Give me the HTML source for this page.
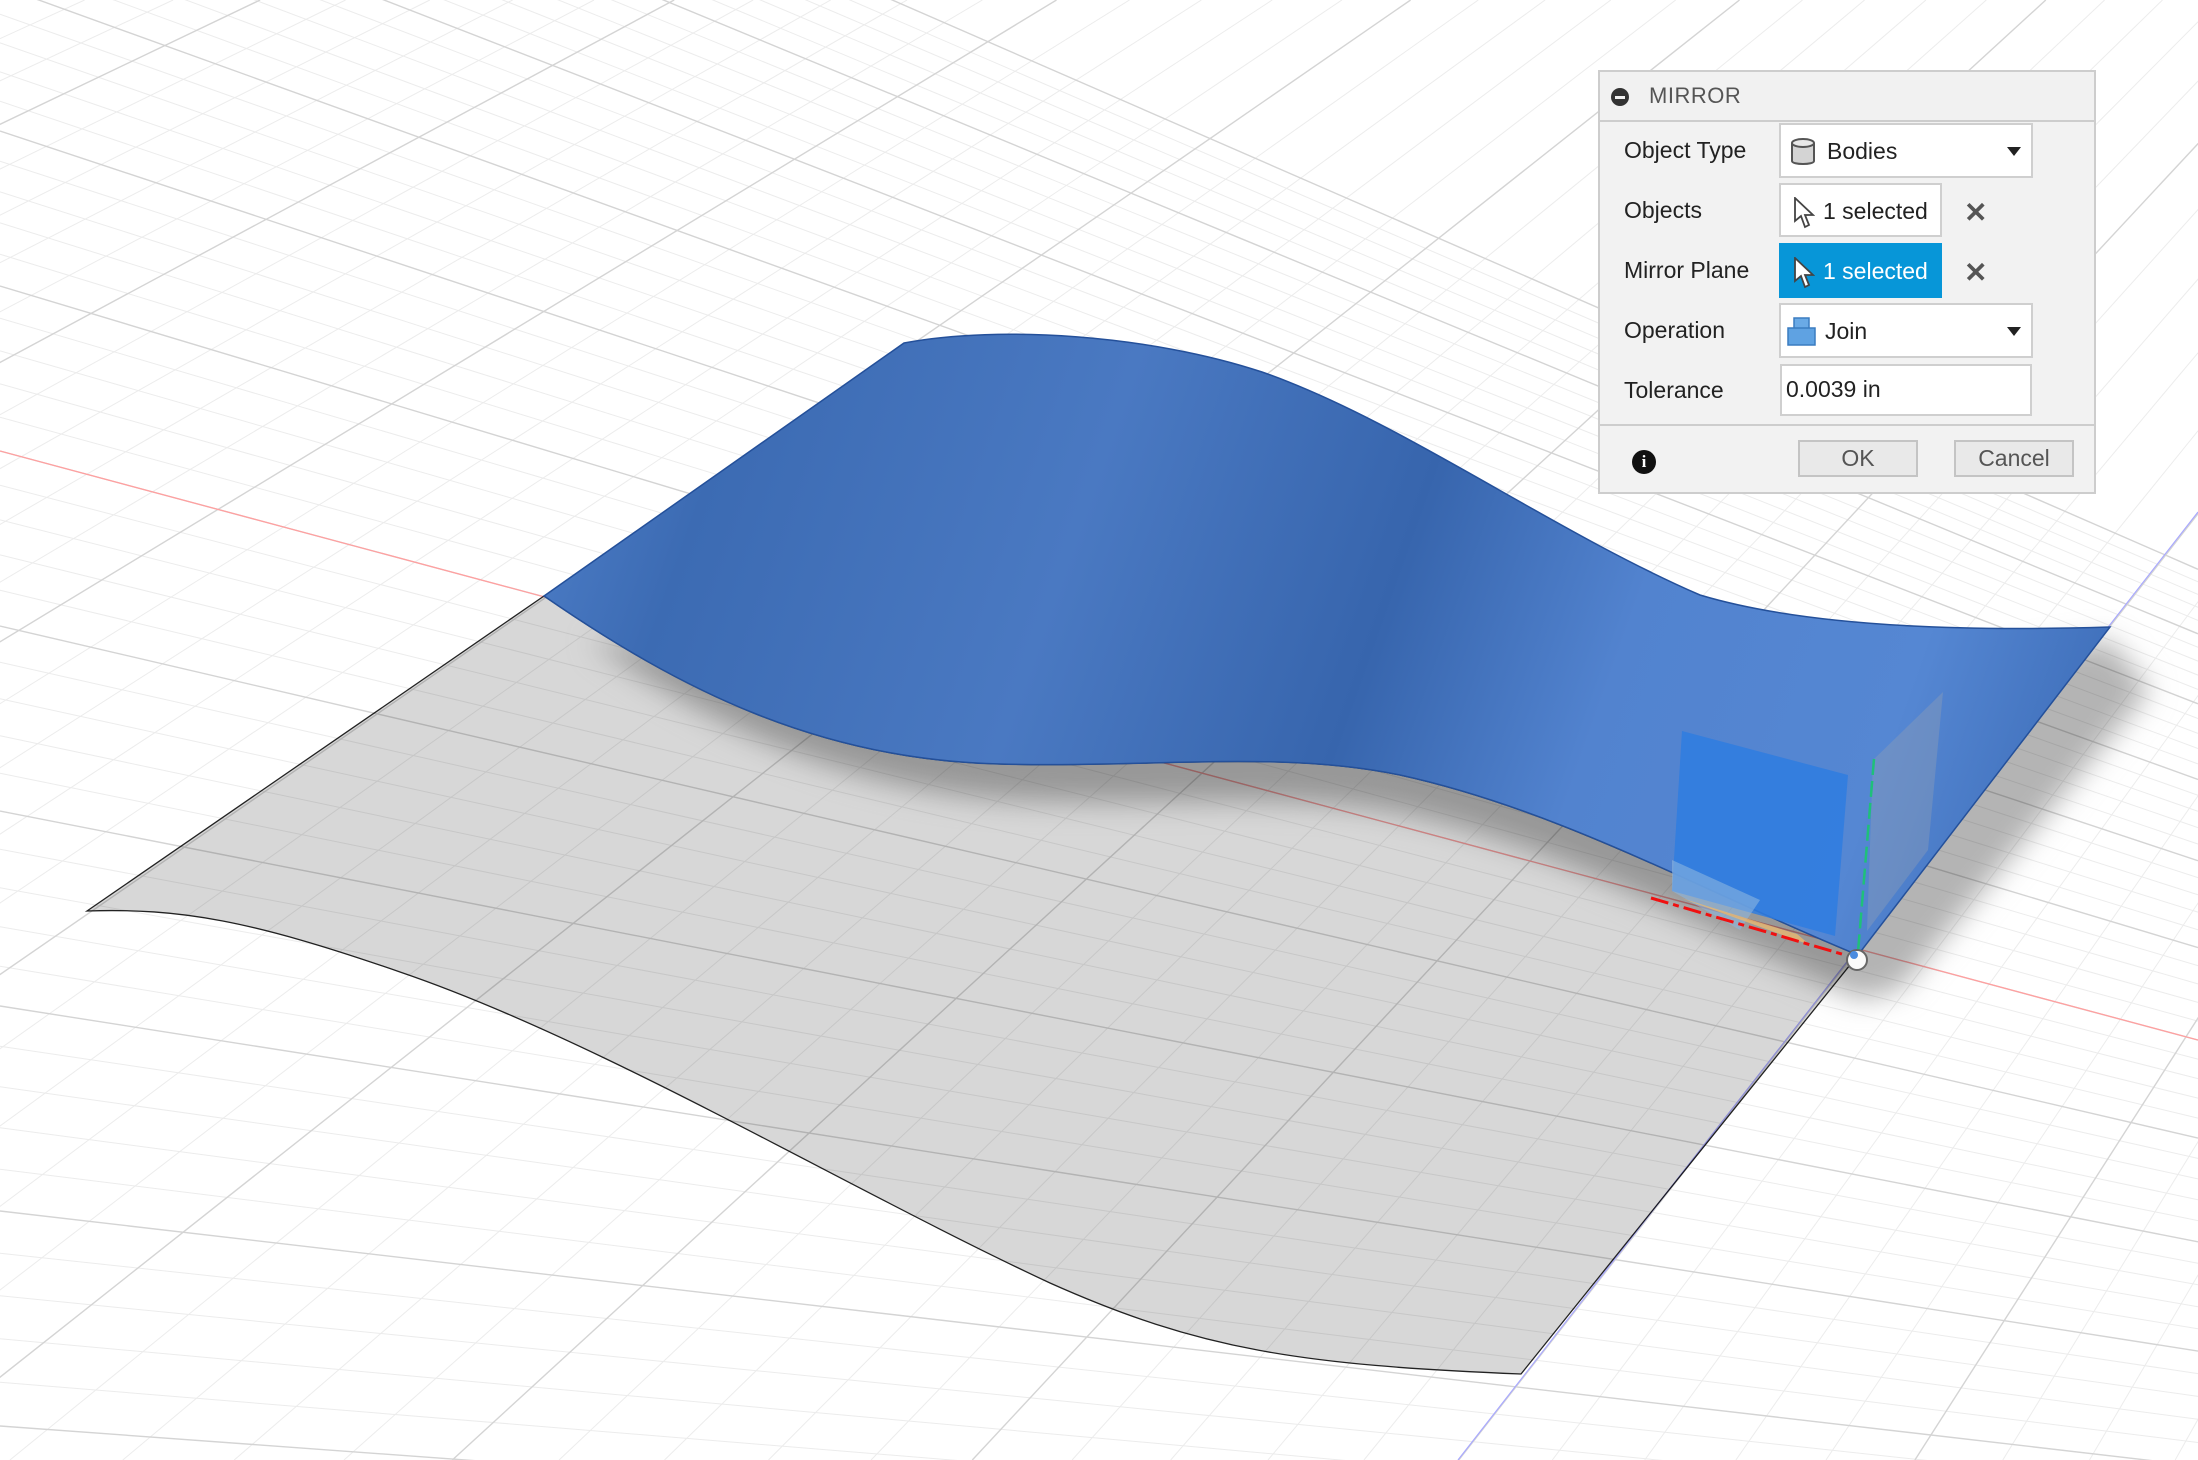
<!DOCTYPE html>
<html><head><meta charset="utf-8">
<style>
html,body{margin:0;padding:0;background:#fff;width:2198px;height:1460px;overflow:hidden;font-family:"Liberation Sans",sans-serif}
#scene{position:absolute;left:0;top:0}
.dlg{position:absolute;left:1598px;top:70px;width:498px;height:424px;background:#f2f2f2;border:2px solid #cdcdcd;box-sizing:border-box}
.hdr{position:absolute;left:0;top:0;right:0;height:48px;border-bottom:2px solid #cdcdcd;background:#f1f1f1}
.hdr .t{position:absolute;left:49px;top:11px;font-size:22px;color:#555;letter-spacing:0.5px}
.hdr .m{position:absolute;left:11px;top:16px;width:18px;height:18px;border-radius:50%;background:#333}
.hdr .m:after{content:"";position:absolute;left:4px;top:8px;width:10px;height:2.5px;background:#f2f2f2}
.lbl{position:absolute;left:24px;font-size:23px;color:#222}
.box{position:absolute;background:#fff;border:2px solid #cfcfcf;box-sizing:border-box;font-size:23px;color:#222}
.box span{position:absolute;top:13px}
.sel{background:#0796d8;border-color:#0796d8;color:#fff}
.arr{position:absolute;right:10px;top:22px;width:0;height:0;border-left:7px solid transparent;border-right:7px solid transparent;border-top:9px solid #222}
.x{position:absolute;left:364px;font-size:28px;color:#555;font-weight:bold}
.foot{position:absolute;left:0;right:0;top:352px;border-top:2px solid #cdcdcd}
.btn{position:absolute;top:368px;height:37px;background:#e9e9e9;border:2px solid #c4c4c4;box-sizing:border-box;font-size:23px;color:#555;text-align:center;line-height:33px}
.info{position:absolute;left:32px;top:378px;width:24px;height:24px;border-radius:50%;background:#111;color:#fff;font:bold 17px "Liberation Serif",serif;text-align:center;line-height:24px}
</style></head><body>
<svg id="scene" width="2198" height="1460" viewBox="0 0 2198 1460" xmlns="http://www.w3.org/2000/svg">
<defs>
<linearGradient id="bg1" x1="560" y1="330" x2="2050" y2="860" gradientUnits="userSpaceOnUse">
<stop offset="0" stop-color="#4f80ca"/>
<stop offset="0.12" stop-color="#3c6bb3"/>
<stop offset="0.35" stop-color="#4a79c2"/>
<stop offset="0.55" stop-color="#3765ad"/>
<stop offset="0.7" stop-color="#5283cf"/>
<stop offset="0.88" stop-color="#5587d3"/>
<stop offset="1" stop-color="#3f6fba"/>
</linearGradient>
<filter id="blur" x="-10%" y="-10%" width="120%" height="120%"><feGaussianBlur stdDeviation="14"/></filter>
</defs>
<g id="grid"></g>
<line x1="0" y1="451" x2="2198" y2="1040" stroke="#ffa0a0" stroke-width="1.3"/>
<line x1="2198" y1="512" x2="1458" y2="1460" stroke="#a8a8ff" stroke-width="1.2"/>
<path style="mix-blend-mode:multiply" fill="#d7d7d7" stroke="#222" stroke-width="1.3" d="M87,911 L544,596 C680,690 820,760 1000,764 C1150,768 1280,750 1400,775 C1560,810 1700,890 1858,955 L1521,1374 C1300,1365 1200,1350 1050,1283 C850,1190 600,1040 400,972 C250,920 180,908 87,911 Z"/>
<g style="mix-blend-mode:multiply" filter="url(#blur)">
<path fill="#b4b4b4" d="M590,640 C700,720 840,790 1010,800 C1160,808 1290,790 1410,815 C1570,850 1700,930 1860,1000 L1900,990 L2150,690 L2110,640 C1960,660 1900,700 1700,720 L1100,700 Z"/>
</g>
<path fill="url(#bg1)" stroke="#24509a" stroke-width="1.5" d="M544,596 C680,690 820,760 1000,764 C1150,768 1280,750 1400,775 C1560,810 1700,890 1858,955 L2110,627 C1950,632 1800,625 1700,595 C1550,530 1400,420 1262,372 C1150,335 1000,325 904,343 Z"/>
<polygon points="1682,731 1848,775 1835,936 1672,891" fill="#2f7de0" opacity="0.85"/>
<polygon points="1672,860 1760,900 1740,930 1672,891" fill="#8cb6e0" opacity="0.6"/>
<polygon points="1681,898 1797,934 1810,945 1700,905" fill="#e8b870" opacity="0.8"/>
<polygon points="1943,692 1928,850 1867,931 1873,760" fill="#8a9cb8" opacity="0.45"/>
<line x1="1874" y1="759" x2="1858" y2="952" stroke="#1fc07a" stroke-width="2.5" stroke-dasharray="16,6"/>
<line x1="1651" y1="898" x2="1845" y2="955" stroke="#f01010" stroke-width="3" stroke-dasharray="18,5,6,5"/>
<circle cx="1857" cy="960" r="10" fill="#fafafa" stroke="#666" stroke-width="2"/>
<circle cx="1854" cy="955" r="4" fill="#4a8be0"/>
</svg>

<div class="dlg">
 <div class="hdr"><div class="m"></div><div class="t">MIRROR</div></div>
 <div class="lbl" style="top:65px">Object Type</div>
 <div class="box" style="left:179px;top:51px;width:254px;height:55px">
  <svg style="position:absolute;left:8px;top:12px" width="28" height="30" viewBox="0 0 28 30"><path d="M3,6 L3,24 C3,28 25,28 25,24 L25,6" fill="#d4d4d4" stroke="#555" stroke-width="2"/><ellipse cx="14" cy="6" rx="11" ry="4" fill="#e8e8e8" stroke="#555" stroke-width="2"/></svg>
  <span style="left:46px">Bodies</span><div class="arr"></div></div>
 <div class="lbl" style="top:125px">Objects</div>
 <div class="box" style="left:179px;top:111px;width:163px;height:54px">
  <svg style="position:absolute;left:12px;top:12px" width="22" height="32" viewBox="0 0 22 32"><path d="M2,1 L2,24 L8,19 L12,30 L16,28 L12,18 L20,18 Z" fill="#fff" stroke="#444" stroke-width="1.8"/></svg>
  <span style="left:42px">1 selected</span></div>
 <div class="x" style="top:124px">✕</div>
 <div class="lbl" style="top:185px">Mirror Plane</div>
 <div class="box sel" style="left:179px;top:171px;width:163px;height:55px">
  <svg style="position:absolute;left:12px;top:12px" width="22" height="32" viewBox="0 0 22 32"><path d="M2,1 L2,24 L8,19 L12,30 L16,28 L12,18 L20,18 Z" fill="#fff" stroke="#444" stroke-width="1.8"/></svg>
  <span style="left:42px">1 selected</span></div>
 <div class="x" style="top:184px">✕</div>
 <div class="lbl" style="top:245px">Operation</div>
 <div class="box" style="left:179px;top:231px;width:254px;height:55px">
  <svg style="position:absolute;left:6px;top:12px" width="30" height="30" viewBox="0 0 30 30"><rect x="7" y="1" width="15" height="18" fill="#6aaae6" stroke="#3a7cc0" stroke-width="1.5"/><rect x="1" y="11" width="27" height="17" fill="#5fa2e2" stroke="#3a7cc0" stroke-width="1.5"/></svg>
  <span style="left:44px">Join</span><div class="arr"></div></div>
 <div class="lbl" style="top:305px">Tolerance</div>
 <div class="box" style="left:180px;top:292px;width:252px;height:52px"><span style="left:4px;top:10px">0.0039 in</span></div>
 <div class="foot"></div>
 <div class="info">i</div>
 <div class="btn" style="left:198px;width:120px">OK</div>
 <div class="btn" style="left:354px;width:120px">Cancel</div>
</div>

<script>
(function(){
 var minor='',major='';
 function L(x1,y1,x2,y2){return '<line x1="'+x1.toFixed(1)+'" y1="'+y1.toFixed(1)+'" x2="'+x2.toFixed(1)+'" y2="'+y2.toFixed(1)+'"/>';}
 var VA=[5000,1791],VB=[3993,-1784];
 for(var i=-30;i<=40;i++){var k=i/5;var y0=451+170*k+5*k*k;var s=(VA[1]-y0)/VA[0];
  var l=L(0,y0,2198,y0+s*2198); if(i%5==0)major+=l;else minor+=l;}
 for(var j=-40;j<=40;j++){var xr=1858+j*328/5;if(xr>3300)continue;var yr=451+0.268*xr;
  var m=(VB[1]-yr)/(VB[0]-xr);
  var xa=xr+(0-yr)/m, xb=xr+(1460-yr)/m;
  var l=L(xa,0,xb,1460); if(j%5==0)major+=l;else minor+=l;}
 document.getElementById('grid').innerHTML='<g stroke="#ececec" stroke-width="1">'+minor+'</g><g stroke="#d4d4d4" stroke-width="1.4">'+major+'</g>';
})();
</script>
</body></html>
